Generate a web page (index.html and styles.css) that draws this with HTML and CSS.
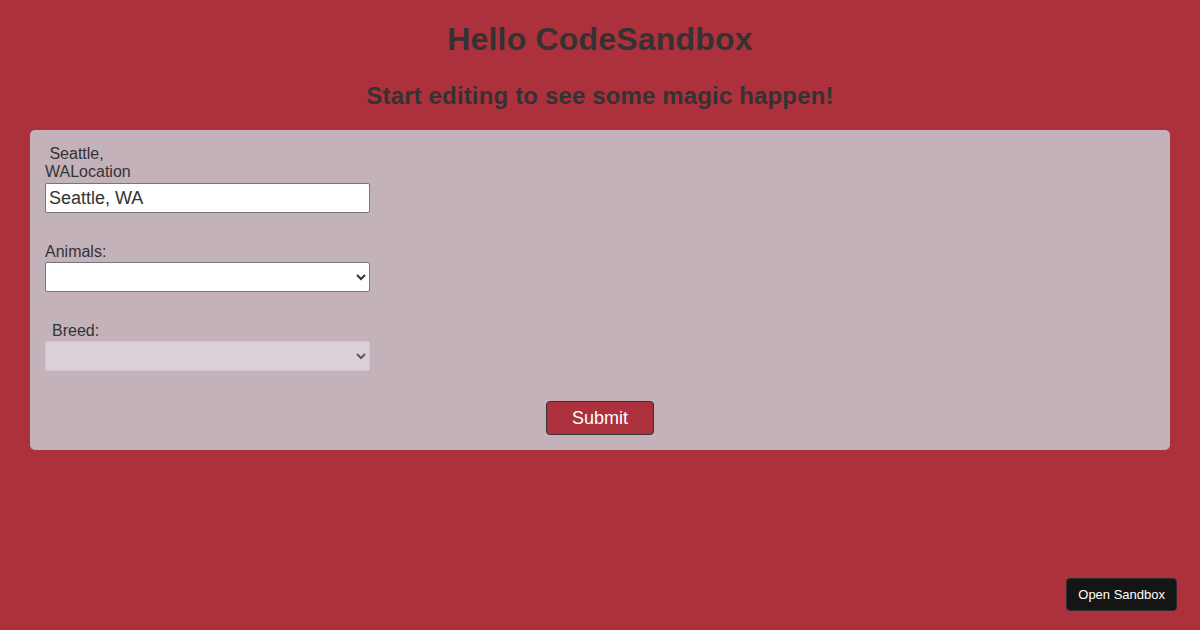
FILE: index.html
```html
<!DOCTYPE html>
<html lang="en">
<head>
  <meta charset="UTF-8">
  <meta name="viewport" content="width=device-width, initial-scale=1.0">
  <title>Hello CodeSandbox</title>
  <link rel="stylesheet" href="styles.css">
</head>
<body>
<div class="app">
  <h1>Hello CodeSandbox</h1>
  <h2>Start editing to see some magic happen!</h2>

  <form class="search-form">
    <div class="field">
      <label class="field-label narrow" for="location">&nbsp;Seattle, WALocation</label>
      <input class="text-input" id="location" type="text" value="Seattle, WA">
    </div>

    <div class="field">
      <label class="field-label" for="animal">Animals:</label>
      <select class="select-input" id="animal">
        <option value=""></option>
      </select>
    </div>

    <div class="field">
      <label class="field-label indented" for="breed">Breed:</label>
      <select class="select-input" id="breed" disabled>
        <option value=""></option>
      </select>
    </div>

    <div class="form-actions">
      <button class="submit-btn" type="button">Submit</button>
    </div>
  </form>
</div>

<a class="open-sandbox" href="#">Open Sandbox</a>
</body>
</html>
```

FILE: styles.css
```css
:root {
  --page-bg: #AC313D;
  --panel-bg: #C4B2BB;
  --text-dark: #333333;
  --disabled-bg: #E6DEE3;
}

* {
  box-sizing: border-box;
}

body {
  margin: 0;
  padding: 0 30px;
  background: var(--page-bg);
  color: var(--text-dark);
  font-family: "Liberation Sans", Arial, sans-serif;
  min-height: 100vh;
}

.app {
  padding-top: 1px;
  text-align: center;
}

h1 {
  font-size: 32px;
  letter-spacing: 0.2px;
  margin: 20px 0 24px;
}

h2 {
  font-size: 24px;
  letter-spacing: 0.15px;
  margin: 0 0 20px;
}

.search-form {
  background: var(--panel-bg);
  border-radius: 5px;
  padding: 15px 15px 15px;
  text-align: left;
}

.field {
  margin-bottom: 30px;
}

.field-label {
  display: block;
  font-size: 16px;
  line-height: 18px;
  margin-bottom: 1px;
}

.field-label.narrow {
  width: 95px;
  margin-bottom: 2px;
}

.field-label.indented {
  padding-left: 7px;
}

.text-input,
.select-input {
  display: block;
  width: 325px;
  height: 30px;
  border: 1px solid #767676;
  border-radius: 2px;
  background: #FFFFFF;
  font-family: inherit;
  color: var(--text-dark);
}

.text-input {
  font-size: 18px;
  padding: 0 3px;
}

.select-input {
  font-size: 16px;
}

.select-input:disabled {
  background: var(--disabled-bg);
  border-color: #D6CCD1;
}

.form-actions {
  display: flex;
  justify-content: center;
}

.submit-btn {
  width: 108px;
  height: 34px;
  background: var(--page-bg);
  color: #FFFFFF;
  border: 1px solid #333333;
  border-radius: 4px;
  font-family: inherit;
  font-size: 18px;
}

.open-sandbox {
  position: fixed;
  right: 23px;
  bottom: 19px;
  background: #151515;
  color: #FFFFFF;
  border: 1px solid #2E2E2E;
  border-radius: 4px;
  font-size: 13px;
  line-height: 15px;
  padding: 8px 11px;
  text-decoration: none;
}
```
